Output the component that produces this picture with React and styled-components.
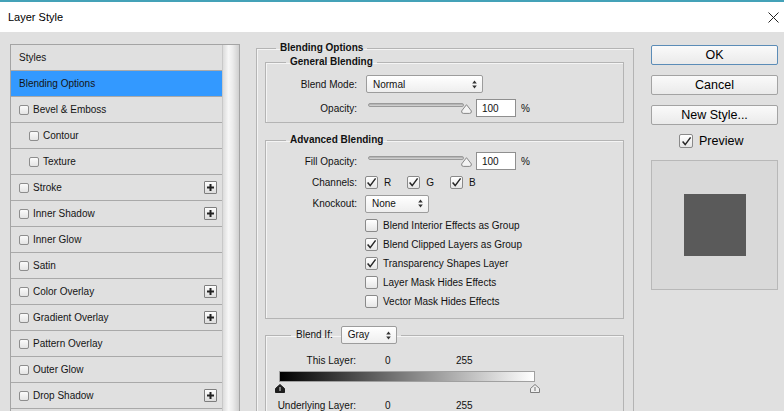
import React from "react";
import styled, { createGlobalStyle } from "styled-components";

const GlobalStyle = createGlobalStyle`
  html, body {
    margin: 0;
    padding: 0;
    background: #e0e0e0;
  }
  body {
    font-family: "Liberation Sans", Arial, sans-serif;
    font-size: 10px;
    color: #111;
  }
  * {
    box-sizing: border-box;
  }
`;

const effects = [
  { name: "Styles", plain: true },
  { name: "Blending Options", plain: true, active: true },
  { name: "Bevel & Emboss" },
  { name: "Contour", indent: true },
  { name: "Texture", indent: true },
  { name: "Stroke", plus: true },
  { name: "Inner Shadow", plus: true },
  { name: "Inner Glow" },
  { name: "Satin" },
  { name: "Color Overlay", plus: true },
  { name: "Gradient Overlay", plus: true },
  { name: "Pattern Overlay" },
  { name: "Outer Glow" },
  { name: "Drop Shadow", plus: true },
  { name: "" },
];

const options = [
  { label: "Blend Interior Effects as Group", on: false },
  { label: "Blend Clipped Layers as Group", on: true },
  { label: "Transparency Shapes Layer", on: true },
  { label: "Layer Mask Hides Effects", on: false },
  { label: "Vector Mask Hides Effects", on: false },
];

function Check() {
  return (
    <svg width="11" height="11" viewBox="0 0 11 11">
      <path d="M1.6 5.6 L4.2 8.6 L9.6 1.4" fill="none" stroke="#262626" strokeWidth="1.5" />
    </svg>
  );
}

function UpDown() {
  return (
    <svg width="5" height="9" viewBox="0 0 5 9">
      <path d="M2.5 0.5 L4.8 3.5 H0.2 Z M2.5 8.5 L4.8 5.5 H0.2 Z" fill="#333" />
    </svg>
  );
}

function SliderThumb() {
  return (
    <svg width="11" height="10" viewBox="0 0 11 10">
      <path d="M5.5 0.7 L10.4 7 Q10.6 9.4 8.6 9.4 H2.4 Q0.4 9.4 0.6 7 Z" fill="#f4f4f4" stroke="#7c7c7c" strokeWidth="0.9" />
    </svg>
  );
}

function RangeThumb({ dark }) {
  return (
    <svg width="10" height="9" viewBox="0 0 10 9">
      <path
        d="M5 0.5 L9.5 4.5 V8.5 H0.5 V4.5 Z"
        fill={dark ? "#1e1e1e" : "#efefef"}
        stroke={dark ? "#1e1e1e" : "#7d7d7d"}
      />
      <line x1="5" y1="3" x2="5" y2="7" stroke={dark ? "#ddd" : "#777"} />
    </svg>
  );
}

function Select({ value, width }) {
  return (
    <SelectBox $w={width}>
      <span>{value}</span>
      <UpDown />
    </SelectBox>
  );
}

function Slider() {
  return (
    <SliderRow>
      <SliderBox>
        <Track />
        <Thumb>
          <SliderThumb />
        </Thumb>
      </SliderBox>
      <NumInput>100</NumInput>
      <Pct>%</Pct>
    </SliderRow>
  );
}

function App() {
  return (
    <>
      <GlobalStyle />
      <Window>
        <TopEdge />
        <TitleBar>
          <span>Layer Style</span>
          <svg width="11" height="11" viewBox="0 0 11 11">
            <path d="M0.5 0.5 L10.5 10.5 M10.5 0.5 L0.5 10.5" stroke="#222" strokeWidth="1" />
          </svg>
        </TitleBar>

        <Body>
          <LeftPanel>
            <EffectList>
              {effects.map((e, i) => (
                <EffectRow key={i} $active={e.active} $indent={e.indent}>
                  {!e.plain && e.name && <SmallBox />}
                  {e.name}
                  {e.plus && (
                    <PlusBtn>
                      <svg width="9" height="9" viewBox="0 0 9 9">
                        <path d="M4.5 1 V8 M1 4.5 H8" stroke="#222" strokeWidth="2" />
                      </svg>
                    </PlusBtn>
                  )}
                </EffectRow>
              ))}
            </EffectList>
            <ScrollBar />
          </LeftPanel>

          <Middle>
            <OuterGroup>
              <Legend $ml={11}>Blending Options</Legend>

              <Group $pt={4} $pb={2}>
                <Legend $ml={20}>General Blending</Legend>
                <FormGrid>
                  <Label $h={24}>Blend Mode:</Label>
                  <Control>
                    <Select value="Normal" width={117} />
                  </Control>
                  <Label $h={24}>Opacity:</Label>
                  <Control>
                    <Slider />
                  </Control>
                </FormGrid>
              </Group>

              <Group $mt={11} $pt={4} $pb={7}>
                <Legend $ml={20}>Advanced Blending</Legend>
                <FormGrid>
                  <Label $h={22}>Fill Opacity:</Label>
                  <Control>
                    <Slider />
                  </Control>
                  <Label $h={21}>Channels:</Label>
                  <Control $ml={-1}>
                    {["R", "G", "B"].map((c) => (
                      <Channel key={c}>
                        <CheckBox>
                          <Check />
                        </CheckBox>
                        {c}
                      </Channel>
                    ))}
                  </Control>
                  <Label $h={21}>Knockout:</Label>
                  <Control $ml={-1}>
                    <Select value="None" width={64} />
                  </Control>
                </FormGrid>
                <OptionList>
                  {options.map((o) => (
                    <OptionRow key={o.label}>
                      <CheckBox>{o.on && <Check />}</CheckBox>
                      {o.label}
                    </OptionRow>
                  ))}
                </OptionList>
              </Group>

              <Group $mt={7} $pt={9} $pb={4} $pl={10}>
                <Legend $ml={15}>
                  <LegendInner>
                    <span>Blend If:</span>
                    <Select value="Gray" width={56} />
                  </LegendInner>
                </Legend>
                <RangeRow>
                  <RangeLabel>This Layer:</RangeLabel>
                  <RangeValue>0</RangeValue>
                  <span>255</span>
                </RangeRow>
                <GradientBar />
                <ThumbRow>
                  <RangeThumb dark />
                  <RangeThumb />
                </ThumbRow>
                <RangeRow $mt={5}>
                  <RangeLabel>Underlying Layer:</RangeLabel>
                  <RangeValue>0</RangeValue>
                  <span>255</span>
                </RangeRow>
              </Group>
            </OuterGroup>
          </Middle>

          <RightColumn>
            <Button $primary>OK</Button>
            <Button>Cancel</Button>
            <Button>New Style...</Button>
            <PreviewToggle>
              <CheckBox $size={14}>
                <Check />
              </CheckBox>
              Preview
            </PreviewToggle>
            <PreviewBox>
              <Swatch />
            </PreviewBox>
          </RightColumn>
        </Body>
      </Window>
    </>
  );
}

// styled components

const Window = styled.div`
  width: 784px;
  height: 411px;
  overflow: hidden;
  background: #e0e0e0;
  display: flex;
  flex-direction: column;
`;

const TopEdge = styled.div`
  flex: none;
  height: 2px;
  background: #44a2b8;
`;

const TitleBar = styled.div`
  flex: none;
  height: 30px;
  background: #fff;
  display: flex;
  align-items: center;
  justify-content: space-between;
  padding: 0 5px 0 8px;
  font-size: 11px;
  color: #000;
`;

const Body = styled.div`
  flex: 1;
  display: flex;
  align-items: flex-start;
  padding: 10px 6px 0 10px;
`;

const LeftPanel = styled.div`
  flex: none;
  margin-top: 2px;
  width: 230px;
  height: 390px;
  border: 1px solid #a4a4a4;
  display: flex;
`;

const EffectList = styled.div`
  flex: 1;
`;

const EffectRow = styled.div`
  height: 26px;
  display: flex;
  align-items: center;
  gap: 4px;
  padding: 0 5px 0 ${(p) => (p.$indent ? 18 : 8)}px;
  border-bottom: 1px solid #a9a9a9;
  background: ${(p) => (p.$active ? "#3399ff" : "transparent")};
  color: #141414;
  white-space: nowrap;
`;

const SmallBox = styled.span`
  width: 10px;
  height: 10px;
  border: 1px solid #8d8d8d;
  border-radius: 2px;
  background: linear-gradient(#fbfbfb, #e4e4e4);
`;

const PlusBtn = styled.span`
  margin-left: auto;
  width: 13px;
  height: 13px;
  border: 1px solid #7e7e7e;
  border-radius: 1px;
  background: linear-gradient(#fdfdfd, #dcdcdc);
  display: flex;
  align-items: center;
  justify-content: center;
`;

const ScrollBar = styled.div`
  flex: none;
  width: 17px;
  border-left: 1px solid #c8c8c8;
  background: linear-gradient(to right, #dcdcdc, #f7f7f7 35%, #ececec 60%, #cfcfcf);
`;

const Middle = styled.div`
  flex: none;
  width: 378px;
  margin-left: 16px;
`;

const OuterGroup = styled.fieldset`
  margin: 0;
  min-width: 0;
  padding: 2px 9px 40px 8px;
  border: 1px solid #b4b4b4;
  box-shadow: inset 1px 1px 0 #f4f4f4;
`;

const Group = styled.fieldset`
  margin: ${(p) => p.$mt || 0}px 0 0 0;
  min-width: 0;
  padding: ${(p) => p.$pt || 0}px 0 ${(p) => p.$pb || 0}px ${(p) => p.$pl || 0}px;
  border: 1px solid #b4b4b4;
  box-shadow: inset 1px 1px 0 #f4f4f4;
`;

const Legend = styled.legend`
  margin-left: ${(p) => p.$ml}px;
  padding: 0 4px;
  font-weight: bold;
  line-height: 12px;
  color: #111;
`;

const LegendInner = styled.span`
  display: flex;
  align-items: center;
  gap: 8px;
  font-weight: normal;
  padding-left: 1px;
`;

const FormGrid = styled.div`
  display: grid;
  grid-template-columns: 91px 1fr;
  column-gap: 9px;
`;

const Label = styled.div`
  height: ${(p) => p.$h}px;
  display: flex;
  align-items: center;
  justify-content: flex-end;
`;

const Control = styled.div`
  display: flex;
  align-items: center;
  margin-left: ${(p) => p.$ml || 0}px;
`;

const SelectBox = styled.div`
  width: ${(p) => p.$w}px;
  height: 18px;
  display: flex;
  align-items: center;
  justify-content: space-between;
  padding: 0 5px 0 6px;
  border: 1px solid #9c9c9c;
  border-radius: 2px;
  background: linear-gradient(#ffffff, #eeeeee);
  color: #111;
  font-weight: normal;
`;

const SliderRow = styled.div`
  display: flex;
  align-items: center;
`;

const SliderBox = styled.div`
  position: relative;
  width: 104px;
  height: 12px;
  margin-left: 2px;
`;

const Track = styled.div`
  width: 96px;
  height: 4px;
  margin-top: 1px;
  border-radius: 2px;
  border: 1px solid #9a9a9a;
  background: linear-gradient(#a9a9a9, #d9d9d9);
`;

const Thumb = styled.div`
  position: absolute;
  right: 0;
  top: 2px;
  display: flex;
`;

const NumInput = styled.div`
  width: 40px;
  height: 18px;
  margin-left: 4px;
  padding-left: 5px;
  display: flex;
  align-items: center;
  border: 1px solid #8f8f8f;
  background: #fff;
`;

const Pct = styled.span`
  margin-left: 5px;
`;

const Channel = styled.span`
  display: flex;
  align-items: center;
  gap: 6px;
  margin-right: 16px;
`;

const CheckBox = styled.span`
  flex: none;
  width: ${(p) => p.$size || 13}px;
  height: ${(p) => p.$size || 13}px;
  border: 1px solid #8a8a8a;
  border-radius: 2px;
  background: linear-gradient(#ffffff, #e6e6e6);
  display: flex;
  align-items: center;
  justify-content: center;
`;

const OptionList = styled.div`
  margin: 2px 0 0 99px;
`;

const OptionRow = styled.div`
  height: 19px;
  display: flex;
  align-items: center;
  gap: 5px;
`;

const RangeRow = styled.div`
  height: 14px;
  display: flex;
  align-items: center;
  white-space: nowrap;
  margin-top: ${(p) => p.$mt || 0}px;
`;

const RangeLabel = styled.span`
  width: 80px;
  text-align: right;
`;

const RangeValue = styled.span`
  width: 71px;
  margin-left: 29px;
`;

const GradientBar = styled.div`
  width: 256px;
  height: 11px;
  margin: 4px 0 0 3px;
  border: 1px solid #a0a0a0;
  background: linear-gradient(to right, #000, #fff);
`;

const ThumbRow = styled.div`
  width: 265px;
  margin: 2px 0 0 -1px;
  display: flex;
  justify-content: space-between;
`;

const RightColumn = styled.div`
  flex: none;
  width: 127px;
  margin: 3px 0 0 17px;
  display: flex;
  flex-direction: column;
`;

const Button = styled.div`
  height: 20px;
  margin-bottom: 10px;
  display: flex;
  align-items: center;
  justify-content: center;
  border: 1px solid ${(p) => (p.$primary ? "#5b8cb7" : "#a3a3a3")};
  border-radius: 2px;
  background: linear-gradient(#fafafa, #eaeaea);
  font-size: 12.5px;
  color: #000;
`;

const PreviewToggle = styled.div`
  height: 18px;
  margin-top: -3px;
  padding-left: 28px;
  display: flex;
  align-items: center;
  gap: 6px;
  font-size: 12.5px;
  color: #000;
`;

const PreviewBox = styled.div`
  height: 130px;
  margin-top: 10px;
  border: 1px solid #b8b8b8;
  background: #d9d9d9;
  display: flex;
  align-items: center;
  justify-content: center;
`;

const Swatch = styled.div`
  width: 62px;
  height: 62px;
  background: #5a5a5a;
`;

export default App;
